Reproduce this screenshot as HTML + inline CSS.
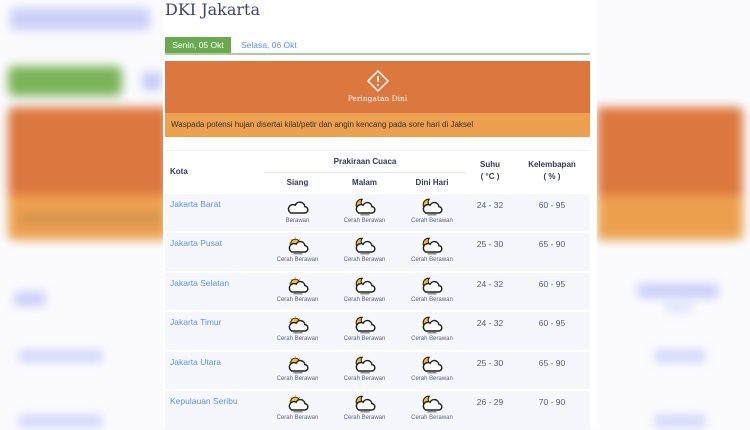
<!DOCTYPE html>
<html><head><meta charset="utf-8"><style>
*{margin:0;padding:0;box-sizing:border-box}
body{width:750px;height:426px;overflow:hidden;background:#fbfbfe;font-family:"Liberation Sans",sans-serif;position:relative}
.bg{position:absolute;inset:0;filter:blur(5px)}
.b{position:absolute}
.main{position:absolute;left:163px;top:0;width:434px;height:426px;background:#fff}
.title{position:absolute;left:2px;top:0;font-family:"DejaVu Serif","Liberation Serif",serif;font-size:16px;color:#3f4470}
.tab1{position:absolute;left:2px;top:37px;width:66px;height:17px;background:#6aaa4e;color:#fff;font-size:8.5px;line-height:17px;text-align:center}
.tab2{position:absolute;left:78px;top:37px;height:17px;color:#5a93e8;font-size:8.5px;line-height:17px}
.gline{position:absolute;left:2px;top:53px;width:425px;height:2px;background:#a9cfa0}
.warn{position:absolute;left:2px;top:61px;width:425px;height:52px;background:#dc773f;color:#fff;text-align:center}
.warn2{position:absolute;left:2px;top:113px;width:425px;height:24px;background:#eda050;color:#333;font-size:8px;line-height:24px;padding-left:6px}
table{position:absolute;left:2px;top:150px;width:425px;border-collapse:collapse;font-size:8px}
th{color:#333a55;font-weight:bold;font-size:8px}
td{color:#555;vertical-align:top}
tr.r td{background:#f6f7fc;border-top:2px solid #fff;height:39.6px}
.k{color:#5a93e8;padding:5px 0 0 5px;font-size:8.5px}
.ic{text-align:center;font-size:6px;color:#5a5f8a;padding-top:4px}
.ic svg{display:block;margin:0 auto 1px}
.n{text-align:center;padding-top:6px;color:#555a7a;font-size:8.5px}
</style></head><body>
<svg width="0" height="0" style="position:absolute"><defs>
<symbol id="cl" viewBox="0 0 24 20"><path d="M4 16h15a3.5 3.5 0 0 0 .5-7 5.5 5.5 0 0 0-10.5-1.5A4.3 4.3 0 0 0 4 16z" fill="#fff" stroke="#222" stroke-width="1.6"/></symbol>
<symbol id="mn" viewBox="0 0 24 20"><path d="M9 1a6 6 0 1 0 5 8 5 5 0 0 1-5-8z" fill="#f2c230" stroke="#222" stroke-width="1.2"/><path d="M5 16h14a3.5 3.5 0 0 0 .5-7 5 5 0 0 0-9.5-1.5A4 4 0 0 0 5 16z" fill="#fff" stroke="#222" stroke-width="1.6"/><path d="M7 18h10" stroke="#666" stroke-width="1.2"/></symbol>
<symbol id="sn" viewBox="0 0 24 20"><circle cx="9" cy="7" r="5" fill="#f2c230" stroke="#222" stroke-width="1"/><path d="M9 0v1.5M2 7h1.5M4 2l1 1M14 2l-1 1" stroke="#c9a020" stroke-width="1.2"/><path d="M5 16h14a3.5 3.5 0 0 0 .5-7 5 5 0 0 0-9.5-1.5A4 4 0 0 0 5 16z" fill="#fff" stroke="#222" stroke-width="1.6"/><path d="M7 18h10" stroke="#666" stroke-width="1.2"/></symbol>
</defs></svg>
<div class="bg">
<div class="b" style="left:10px;top:8px;width:140px;height:22px;background:#b8bcf5;border-radius:4px;opacity:.7"></div>
<div class="b" style="left:8px;top:66px;width:114px;height:30px;background:#7cb45a;border-radius:6px"></div>
<div class="b" style="left:142px;top:72px;width:20px;height:18px;background:#c5cbf7"></div>
<div class="b" style="left:8px;top:107px;width:160px;height:90px;background:#dc773f;border-radius:6px 0 0 0"></div>
<div class="b" style="left:8px;top:195px;width:160px;height:45px;background:#eda050;border-radius:0 0 0 6px"></div>
<div class="b" style="left:20px;top:215px;width:140px;height:8px;background:#c9904c"></div>
<div class="b" style="left:14px;top:292px;width:32px;height:14px;background:#c9cdf9;border-radius:4px"></div>
<div class="b" style="left:18px;top:350px;width:85px;height:12px;background:#d0d4fa;border-radius:4px"></div>
<div class="b" style="left:18px;top:415px;width:85px;height:12px;background:#d0d4fa;border-radius:4px"></div>
<div class="b" style="left:597px;top:107px;width:146px;height:90px;background:#dc773f;border-radius:0 6px 0 0"></div>
<div class="b" style="left:597px;top:195px;width:146px;height:45px;background:#eda050;border-radius:0 0 6px 0"></div>
<div class="b" style="left:637px;top:284px;width:82px;height:14px;background:#c9cdf9;border-radius:4px"></div>
<div class="b" style="left:665px;top:304px;width:28px;height:8px;background:#dcdffb"></div>
<div class="b" style="left:655px;top:350px;width:50px;height:12px;background:#d0d4fa"></div>
<div class="b" style="left:655px;top:415px;width:50px;height:12px;background:#d0d4fa"></div>
</div>
<div class="main">
<div class="title">DKI Jakarta</div>
<div class="tab1">Senin, 05 Okt</div>
<div class="tab2">Selasa, 06 Okt</div>
<div class="gline"></div>
<div class="warn">
<svg width="24" height="24" viewBox="0 0 24 24" style="margin-top:8px;display:block;margin-left:auto;margin-right:auto"><path d="M12 2L22 12 12 22 2 12z" fill="none" stroke="#fff" stroke-width="1.5"/><path d="M12 7v6" stroke="#fff" stroke-width="1.8"/><circle cx="12" cy="16" r="1" fill="#fff"/></svg>
<div style="font-family:'DejaVu Serif',serif;font-size:7.5px;margin-top:1px">Peringatan Dini</div>
</div>
<div class="warn2">Waspada potensi hujan disertai kilat/petir dan angin kencang pada sore hari di Jaksel</div>
<table>
<tr style="height:22px;border-top:1px solid #eef0f6"><th rowspan="2" style="text-align:left;padding-left:5px;width:99px">Kota</th><th colspan="3" style="border-bottom:1px solid #e4e6ef">Prakiraan Cuaca</th><th rowspan="2" style="width:48px;line-height:12px">Suhu<br>( °C )</th><th rowspan="2" style="width:76px;line-height:12px">Kelembapan<br>( % )</th></tr>
<tr style="height:20px"><th style="width:67px">Siang</th><th style="width:67px">Malam</th><th style="width:68px">Dini Hari</th></tr>
<tr class="r"><td class="k">Jakarta Barat</td><td class="ic"><svg width="22" height="19"><use href="#cl"/></svg>Berawan</td><td class="ic"><svg width="22" height="19"><use href="#mn"/></svg>Cerah Berawan</td><td class="ic"><svg width="22" height="19"><use href="#mn"/></svg>Cerah Berawan</td><td class="n">24 - 32</td><td class="n">60 - 95</td></tr>
<tr class="r"><td class="k">Jakarta Pusat</td><td class="ic"><svg width="22" height="19"><use href="#sn"/></svg>Cerah Berawan</td><td class="ic"><svg width="22" height="19"><use href="#mn"/></svg>Cerah Berawan</td><td class="ic"><svg width="22" height="19"><use href="#mn"/></svg>Cerah Berawan</td><td class="n">25 - 30</td><td class="n">65 - 90</td></tr>
<tr class="r"><td class="k">Jakarta Selatan</td><td class="ic"><svg width="22" height="19"><use href="#sn"/></svg>Cerah Berawan</td><td class="ic"><svg width="22" height="19"><use href="#mn"/></svg>Cerah Berawan</td><td class="ic"><svg width="22" height="19"><use href="#mn"/></svg>Cerah Berawan</td><td class="n">24 - 32</td><td class="n">60 - 95</td></tr>
<tr class="r"><td class="k">Jakarta Timur</td><td class="ic"><svg width="22" height="19"><use href="#sn"/></svg>Cerah Berawan</td><td class="ic"><svg width="22" height="19"><use href="#mn"/></svg>Cerah Berawan</td><td class="ic"><svg width="22" height="19"><use href="#mn"/></svg>Cerah Berawan</td><td class="n">24 - 32</td><td class="n">60 - 95</td></tr>
<tr class="r"><td class="k">Jakarta Utara</td><td class="ic"><svg width="22" height="19"><use href="#sn"/></svg>Cerah Berawan</td><td class="ic"><svg width="22" height="19"><use href="#mn"/></svg>Cerah Berawan</td><td class="ic"><svg width="22" height="19"><use href="#mn"/></svg>Cerah Berawan</td><td class="n">25 - 30</td><td class="n">65 - 90</td></tr>
<tr class="r"><td class="k">Kepulauan Seribu</td><td class="ic"><svg width="22" height="19"><use href="#sn"/></svg>Cerah Berawan</td><td class="ic"><svg width="22" height="19"><use href="#mn"/></svg>Cerah Berawan</td><td class="ic"><svg width="22" height="19"><use href="#mn"/></svg>Cerah Berawan</td><td class="n">26 - 29</td><td class="n">70 - 90</td></tr>
</table>
</div>
</body></html>
